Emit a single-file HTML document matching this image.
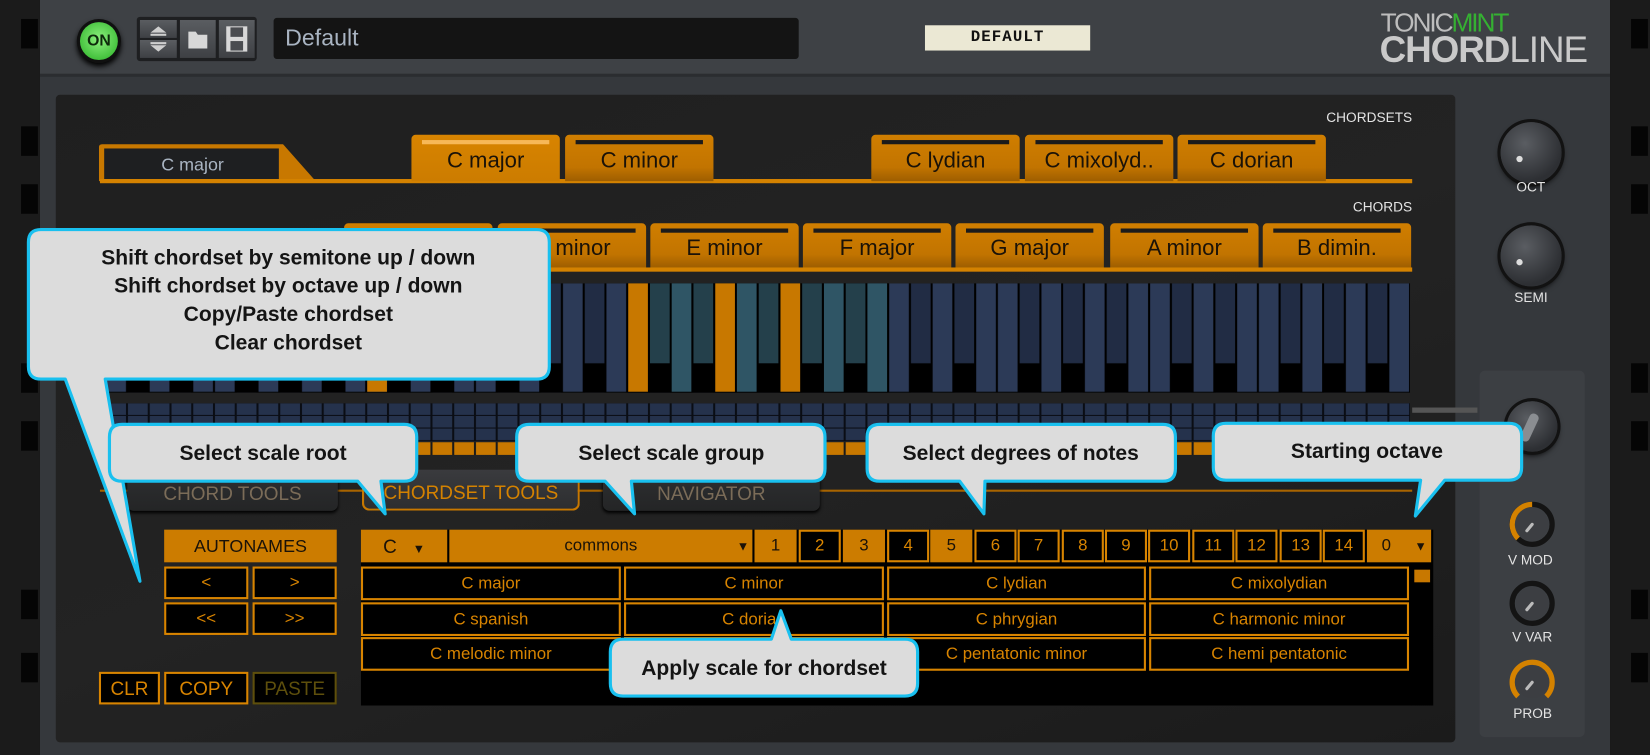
<!DOCTYPE html>
<html><head><meta charset="utf-8">
<style>
html,body{margin:0;padding:0;background:#161616;overflow:hidden}
body{width:1650px;height:755px;position:relative}
#s{position:absolute;left:0;top:0;width:1568px;height:717px;transform:scale(1.05230,1.05300);transform-origin:0 0;font-family:"Liberation Sans Narrow","Liberation Sans",sans-serif}
.a{position:absolute;box-sizing:border-box}
.hole{position:absolute;background:#050505;width:16px;height:28px}
.tab{position:absolute;top:128px;height:44px;width:141px;background:linear-gradient(#d07e00,#c27400 70%,#9e5e00);border-radius:4px 4px 0 0;color:#1a1208;font-size:21px;text-align:center;line-height:50px}
.tab i{position:absolute;left:10px;right:10px;top:5px;height:4px;background:#1b1b1b}
.ctab{top:212px;height:42px;line-height:48px}
.ob{position:absolute;border:2px solid #d88400;background:#000;color:#d88400;font-size:16px;text-align:center;box-sizing:border-box}
.of{position:absolute;background:#cc7c00;color:#1a1208;font-size:16px;text-align:center;box-sizing:border-box}
.lbl{position:absolute;color:#e4e4e4;font-family:"Liberation Sans",sans-serif;font-size:13px}
.kn{position:absolute;border-radius:50%;background:radial-gradient(circle at 40% 35%,#5a5d62,#2d2f33 70%);box-shadow:0 0 0 3px #121212,0 3px 6px #000}
</style></head><body><div id="s">
<div class="a" style="left:0;top:0;width:38px;height:717px;background:#1b1b1b"></div>
<div class="a" style="left:1530px;top:0;width:38px;height:717px;background:#1b1b1b"></div>
<div class="hole" style="left:20px;top:18px"></div><div class="hole" style="left:20px;top:120px"></div><div class="hole" style="left:20px;top:175px"></div><div class="hole" style="left:20px;top:345px"></div><div class="hole" style="left:20px;top:400px"></div><div class="hole" style="left:20px;top:560px"></div><div class="hole" style="left:20px;top:620px"></div>
<div class="hole" style="left:1550px;top:18px"></div><div class="hole" style="left:1550px;top:120px"></div><div class="hole" style="left:1550px;top:175px"></div><div class="hole" style="left:1550px;top:345px"></div><div class="hole" style="left:1550px;top:400px"></div><div class="hole" style="left:1550px;top:560px"></div><div class="hole" style="left:1550px;top:620px"></div>
<div class="a" style="left:38px;top:0;width:1492px;height:717px;background:#35383c"></div>
<div class="a" style="left:38px;top:0;width:1492px;height:73px;background:#3e4145;border-bottom:3px solid #2b2d30"></div>
<div class="a" style="left:73px;top:18px;width:42px;height:42px;border-radius:50%;background:#101010;box-shadow:0 3px 5px #000"></div>
<div class="a" style="left:76px;top:21px;width:36px;height:36px;border-radius:50%;background:radial-gradient(circle at 50% 45%,#8ef07f,#45c23e 70%,#2b8f27);color:#0d2a0b;font-size:15px;font-weight:bold;text-align:center;line-height:36px;font-family:'Liberation Sans Narrow','Liberation Sans',sans-serif">ON</div>
<div class="a" style="left:130px;top:16px;width:114px;height:42px;background:#1e1f21;border-radius:3px"></div>
<div class="a" style="left:133px;top:19px;width:35px;height:17px;background:linear-gradient(#5a5d61,#3e4044)"></div>
<div class="a" style="left:133px;top:38px;width:35px;height:17px;background:linear-gradient(#5a5d61,#3e4044)"></div>
<svg class="a" style="left:133px;top:19px" width="35" height="36"><path d="M10 12 L17.5 6 L25 12Z M10 24 L25 24 L17.5 30Z" fill="#cfcfcf"/><rect x="10" y="13" width="15" height="2" fill="#cfcfcf"/><rect x="10" y="21" width="15" height="2" fill="#cfcfcf"/></svg>
<div class="a" style="left:171px;top:19px;width:34px;height:36px;background:linear-gradient(#5a5d61,#3e4044)"></div>
<svg class="a" style="left:171px;top:19px" width="34" height="36"><path d="M8 11 H15 L17 14 H26 V27 H8Z" fill="#d8d8d8"/></svg>
<div class="a" style="left:208px;top:19px;width:34px;height:36px;background:linear-gradient(#5a5d61,#3e4044)"></div>
<svg class="a" style="left:208px;top:19px" width="34" height="36"><rect x="7" y="6" width="20" height="24" fill="#d8d8d8"/><rect x="11" y="7" width="12" height="9" fill="#4a4c50"/><rect x="11" y="20" width="12" height="9" fill="#4a4c50"/></svg>
<div class="a" style="left:260px;top:17px;width:499px;height:39px;background:#141414;border-radius:3px;color:#a9b4c2;font-size:22px;line-height:38px;padding-left:11px">Default</div>
<div class="a" style="left:879px;top:24px;width:157px;height:24px;background:#ebe8d4;color:#111;font-family:'Liberation Mono',monospace;font-weight:bold;font-size:15px;text-align:center;line-height:24px;letter-spacing:1px">DEFAULT</div>
<div class="a" style="left:1312px;top:8px;font-size:25px;color:#bdbdbd;line-height:28px;letter-spacing:-2px">TONIC<span style="color:#35b032">MINT</span></div>
<div class="a" style="left:1311px;top:29px;font-family:'Liberation Sans',sans-serif;font-size:35px;color:#c9c9c9;line-height:38px;letter-spacing:-1px;font-weight:bold">CHORD<span style="font-weight:normal">LINE</span></div>
<div class="a" style="left:53px;top:90px;width:1330px;height:615px;background:linear-gradient(160deg,#1f1f1f,#232323 50%,#1b1b1b);border-radius:4px"></div>
<div class="lbl" style="right:226px;top:104px">CHORDSETS</div>
<div class="lbl" style="right:226px;top:189px">CHORDS</div>
<svg class="a" style="left:94px;top:136px" width="210" height="40"><path d="M0 4 Q0 1 3 1 H175 L206 36 H0Z" fill="#c87800"/><rect x="5" y="5" width="166" height="29" fill="#1e1f21"/></svg>
<div class="a" style="left:100px;top:141px;width:166px;height:29px;color:#a9b4c2;font-size:17px;text-align:center;line-height:32px">C major</div>
<div class="a" style="left:95px;top:170px;width:1247px;height:4px;background:#d48200"></div>
<div class="tab" style="left:391px;background:linear-gradient(#d88400,#cc7c00)"><i style="background:#f7b858"></i>C major</div>
<div class="tab" style="left:537px"><i></i>C minor</div>
<div class="tab" style="left:828px"><i></i>C lydian</div>
<div class="tab" style="left:974px"><i></i>C mixolyd..</div>
<div class="tab" style="left:1119px"><i></i>C dorian</div>
<div class="tab ctab" style="left:327px"><i></i>D minor</div>
<div class="tab ctab" style="left:473px"><i></i>D minor</div>
<div class="tab ctab" style="left:618px"><i></i>E minor</div>
<div class="tab ctab" style="left:763px"><i></i>F major</div>
<div class="tab ctab" style="left:908px"><i></i>G major</div>
<div class="tab ctab" style="left:1055px"><i></i>A minor</div>
<div class="tab ctab" style="left:1200px"><i></i>B dimin.</div>
<div class="a" style="left:100px;top:254px;width:1242px;height:4px;background:#d48200"></div>
<svg class="a" style="left:100px;top:269px" width="1240" height="164">
<defs>
<pattern id="oct" patternUnits="userSpaceOnUse" width="248" height="104">
<rect width="248" height="104" fill="#000"/>
<rect x="1" width="18.7" height="103" fill="#2c3a57"/><rect x="21.7" width="18.7" height="76" fill="#212c44"/><rect x="42.3" width="18.7" height="103" fill="#2c3a57"/><rect x="63" width="18.7" height="76" fill="#212c44"/><rect x="83.7" width="18.7" height="103" fill="#2c3a57"/><rect x="104.3" width="18.7" height="103" fill="#2c3a57"/><rect x="125" width="18.7" height="76" fill="#212c44"/><rect x="145.7" width="18.7" height="103" fill="#2c3a57"/><rect x="166.3" width="18.7" height="76" fill="#212c44"/><rect x="187" width="18.7" height="103" fill="#2c3a57"/><rect x="207.7" width="18.7" height="76" fill="#212c44"/><rect x="228.3" width="18.7" height="103" fill="#2c3a57"/>
</pattern>
<pattern id="cell" patternUnits="userSpaceOnUse" width="20.667" height="12" y="114">
<rect width="20.667" height="12" fill="#0a0d14"/><rect x="1" y="0" width="18.7" height="11" fill="#25324c"/>
</pattern>
<pattern id="ocell" patternUnits="userSpaceOnUse" width="20.667" height="12" y="151">
<rect width="20.667" height="12" fill="#1a1a1a"/><rect x="1" y="0" width="18.7" height="12" fill="#c87800"/>
</pattern>
</defs>
<rect width="1240" height="104" fill="url(#oct)"/>
<g transform="translate(496,0)">
<rect width="248" height="104" fill="#000"/>
<rect x="1" width="18.7" height="103" fill="#c87800"/><rect x="21.7" width="18.7" height="76" fill="#24404b"/><rect x="42.3" width="18.7" height="103" fill="#2f5565"/><rect x="63" width="18.7" height="76" fill="#24404b"/><rect x="83.7" width="18.7" height="103" fill="#c87800"/><rect x="104.3" width="18.7" height="103" fill="#2f5565"/><rect x="125" width="18.7" height="76" fill="#24404b"/><rect x="145.7" width="18.7" height="103" fill="#c87800"/><rect x="166.3" width="18.7" height="76" fill="#24404b"/><rect x="187" width="18.7" height="103" fill="#2f5565"/><rect x="207.7" width="18.7" height="76" fill="#24404b"/><rect x="228.3" width="18.7" height="103" fill="#2f5565"/>
</g>
<rect x="249" width="18.7" height="103" fill="#c87800"/>
<rect y="104" width="1240" height="10" fill="#222"/>
<rect y="114" width="1240" height="36" fill="url(#cell)"/>
<rect y="151" width="1240" height="12" fill="url(#ocell)"/>
</svg>
<div class="a" style="left:95px;top:465px;width:1247px;height:2px;background:#a86400"></div>
<div class="a" style="left:121px;top:448px;width:200px;height:37px;background:linear-gradient(#2e2f31,#242526);border-radius:0 0 6px 6px;color:#7b6c58;font-size:18px;text-align:center;line-height:42px;box-shadow:0 2px 3px #000">CHORD TOOLS</div>
<div class="a" style="left:344px;top:446px;width:207px;height:39px;background:linear-gradient(#3a3b3e,#2d2e30);border:2px solid #c87800;border-top:none;border-radius:0 0 7px 7px;color:#d48200;font-size:18px;text-align:center;line-height:44px">CHORDSET TOOLS</div>
<div class="a" style="left:573px;top:448px;width:206px;height:37px;background:linear-gradient(#2e2f31,#242526);border-radius:0 0 6px 6px;color:#7b6c58;font-size:18px;text-align:center;line-height:42px;box-shadow:0 2px 3px #000">NAVIGATOR</div>
<div class="of" style="left:156px;top:503px;width:164px;height:31px;line-height:32px;font-size:17px">AUTONAMES</div>
<div class="ob" style="left:156px;top:538px;width:80px;height:31px;line-height:28px">&lt;</div>
<div class="ob" style="left:240px;top:538px;width:80px;height:31px;line-height:28px">&gt;</div>
<div class="ob" style="left:156px;top:572px;width:80px;height:31px;line-height:28px">&lt;&lt;</div>
<div class="ob" style="left:240px;top:572px;width:80px;height:31px;line-height:28px">&gt;&gt;</div>
<div class="ob" style="left:94px;top:638px;width:58px;height:31px;line-height:28px;font-size:18px">CLR</div>
<div class="ob" style="left:156px;top:638px;width:80px;height:31px;line-height:28px;font-size:18px">COPY</div>
<div class="ob" style="left:240px;top:638px;width:80px;height:31px;line-height:28px;font-size:18px;border-color:#5e4f0c;color:#5e4f0c">PASTE</div>
<div class="a" style="left:343px;top:503px;width:1019px;height:167px;background:#000"></div>
<div class="of" style="left:343px;top:503px;width:82px;height:31px;line-height:32px;font-size:18px">C &nbsp;&nbsp;<span style="font-size:12px">▼</span></div>
<div class="of" style="left:427px;top:503px;width:288px;height:31px;line-height:32px">commons<span style="position:absolute;right:3px;font-size:12px">▼</span></div>
<div class="of" style="left:717px;top:503px;width:40px;height:31px;line-height:32px">1</div>
<div class="ob" style="left:759px;top:503px;width:40px;height:31px;line-height:28px;color:#e08a00">2</div>
<div class="of" style="left:801px;top:503px;width:40px;height:31px;line-height:32px">3</div>
<div class="ob" style="left:843px;top:503px;width:40px;height:31px;line-height:28px">4</div>
<div class="of" style="left:884px;top:503px;width:40px;height:31px;line-height:32px">5</div>
<div class="ob" style="left:926px;top:503px;width:40px;height:31px;line-height:28px">6</div>
<div class="ob" style="left:967px;top:503px;width:40px;height:31px;line-height:28px">7</div>
<div class="ob" style="left:1009px;top:503px;width:40px;height:31px;line-height:28px">8</div>
<div class="ob" style="left:1050px;top:503px;width:40px;height:31px;line-height:28px">9</div>
<div class="ob" style="left:1091px;top:503px;width:40px;height:31px;line-height:28px">10</div>
<div class="ob" style="left:1133px;top:503px;width:40px;height:31px;line-height:28px">11</div>
<div class="ob" style="left:1174px;top:503px;width:40px;height:31px;line-height:28px">12</div>
<div class="ob" style="left:1216px;top:503px;width:40px;height:31px;line-height:28px">13</div>
<div class="ob" style="left:1257px;top:503px;width:40px;height:31px;line-height:28px">14</div>
<div class="of" style="left:1299px;top:503px;width:61px;height:31px;line-height:32px;text-align:left;padding-left:14px">0<span style="position:absolute;right:4px;font-size:12px">▼</span></div>
<div class="ob" style="left:343px;top:538px;width:247px;height:32px;line-height:29px">C major</div>
<div class="ob" style="left:593px;top:538px;width:247px;height:32px;line-height:29px">C minor</div>
<div class="ob" style="left:843px;top:538px;width:246px;height:32px;line-height:29px">C lydian</div>
<div class="ob" style="left:1092px;top:538px;width:247px;height:32px;line-height:29px">C mixolydian</div>
<div class="ob" style="left:343px;top:572px;width:247px;height:32px;line-height:29px">C spanish</div>
<div class="ob" style="left:593px;top:572px;width:247px;height:32px;line-height:29px">C dorian</div>
<div class="ob" style="left:843px;top:572px;width:246px;height:32px;line-height:29px">C phrygian</div>
<div class="ob" style="left:1092px;top:572px;width:247px;height:32px;line-height:29px">C harmonic minor</div>
<div class="ob" style="left:343px;top:605px;width:247px;height:32px;line-height:29px">C melodic minor</div>
<div class="ob" style="left:593px;top:605px;width:247px;height:32px;line-height:29px">C jazz minor</div>
<div class="ob" style="left:843px;top:605px;width:246px;height:32px;line-height:29px">C pentatonic minor</div>
<div class="ob" style="left:1092px;top:605px;width:247px;height:32px;line-height:29px">C hemi pentatonic</div>
<div class="a" style="left:1344px;top:541px;width:15px;height:12px;background:#c87800"></div>
<div class="kn" style="left:1426px;top:116px;width:58px;height:58px"></div>
<div class="a" style="left:1441px;top:148px;width:6px;height:6px;border-radius:50%;background:#ddd"></div>
<div class="lbl" style="left:1441px;top:170px">OCT</div>
<div class="kn" style="left:1426px;top:214px;width:58px;height:58px"></div>
<div class="a" style="left:1441px;top:246px;width:6px;height:6px;border-radius:50%;background:#ddd"></div>
<div class="lbl" style="left:1439px;top:275px">SEMI</div>
<div class="a" style="left:1406px;top:352px;width:100px;height:348px;background:#3c3f43;border-radius:5px"></div>
<div class="a" style="left:1342px;top:387px;width:62px;height:5px;background:#555"></div>
<div class="kn" style="left:1432px;top:381px;width:48px;height:48px"></div>
<div class="a" style="left:1449px;top:392px;width:9px;height:28px;border-radius:4px;background:#8a8d91;transform:rotate(25deg)"></div>
<svg class="a" style="left:1432px;top:474px" width="48" height="48"><circle cx="24" cy="24" r="19" fill="none" stroke="#141414" stroke-width="5"/><path d="M10.6 37.4 A19 19 0 0 1 24 5" fill="none" stroke="#d48200" stroke-width="5"/><circle cx="24" cy="24" r="15" fill="#3c3e42"/><line x1="19" y1="30" x2="24" y2="24" stroke="#bbb" stroke-width="3" stroke-linecap="round"/></svg>
<div class="lbl" style="left:1433px;top:524px">V MOD</div>
<svg class="a" style="left:1432px;top:549px" width="48" height="48"><circle cx="24" cy="24" r="19" fill="none" stroke="#141414" stroke-width="5"/><circle cx="24" cy="24" r="15" fill="#3c3e42"/><line x1="19" y1="30" x2="24" y2="24" stroke="#bbb" stroke-width="3" stroke-linecap="round"/></svg>
<div class="lbl" style="left:1437px;top:597px">V VAR</div>
<svg class="a" style="left:1432px;top:624px" width="48" height="48"><path d="M10.6 37.4 A19 19 0 1 1 37.4 37.4" fill="none" stroke="#d48200" stroke-width="5"/><circle cx="24" cy="24" r="15" fill="#3c3e42"/><line x1="19" y1="30" x2="24" y2="24" stroke="#bbb" stroke-width="3" stroke-linecap="round"/></svg>
<div class="lbl" style="left:1438px;top:670px">PROB</div>
<svg class="a" style="left:0;top:0" width="1568" height="717" font-family="Liberation Sans, sans-serif" font-size="20" font-weight="bold" fill="#141414" text-anchor="middle">
<g fill="#dcdcdc" stroke="#19c0ef" stroke-width="3" stroke-linejoin="round">
<path d="M39,218 H510 Q522,218 522,230 V348 Q522,360 510,360 H100 L133,552 L62,360 H39 Q27,360 27,348 V230 Q27,218 39,218Z"/>
<path d="M116,403 H384 Q396,403 396,415 V445 Q396,457 384,457 H362 L366,488 L340,457 H116 Q104,457 104,445 V415 Q104,403 116,403Z"/>
<path d="M503,403 H772 Q784,403 784,415 V445 Q784,457 772,457 H600 L603,488 L575,457 H503 Q491,457 491,445 V415 Q491,403 503,403Z"/>
<path d="M836,403 H1105 Q1117,403 1117,415 V445 Q1117,457 1105,457 H936 L935,488 L912,457 H836 Q824,457 824,445 V415 Q824,403 836,403Z"/>
<path d="M1165,402 H1434 Q1446,402 1446,414 V444 Q1446,456 1434,456 H1373 L1345,490 L1350,456 H1165 Q1153,456 1153,444 V414 Q1153,402 1165,402Z"/>
<path d="M592,607 H733 L742,580 L752,607 H860 Q872,607 872,619 V649 Q872,661 860,661 H592 Q580,661 580,649 V619 Q580,607 592,607Z"/>
</g>
<text x="274" y="251">Shift chordset by semitone up / down</text>
<text x="274" y="278">Shift chordset by octave up / down</text>
<text x="274" y="305">Copy/Paste chordset</text>
<text x="274" y="332">Clear chordset</text>
<text x="250" y="437">Select scale root</text>
<text x="638" y="437">Select scale group</text>
<text x="970" y="437">Select degrees of notes</text>
<text x="1299" y="435">Starting octave</text>
<text x="726" y="641">Apply scale for chordset</text>
</svg>
</div></body></html>
